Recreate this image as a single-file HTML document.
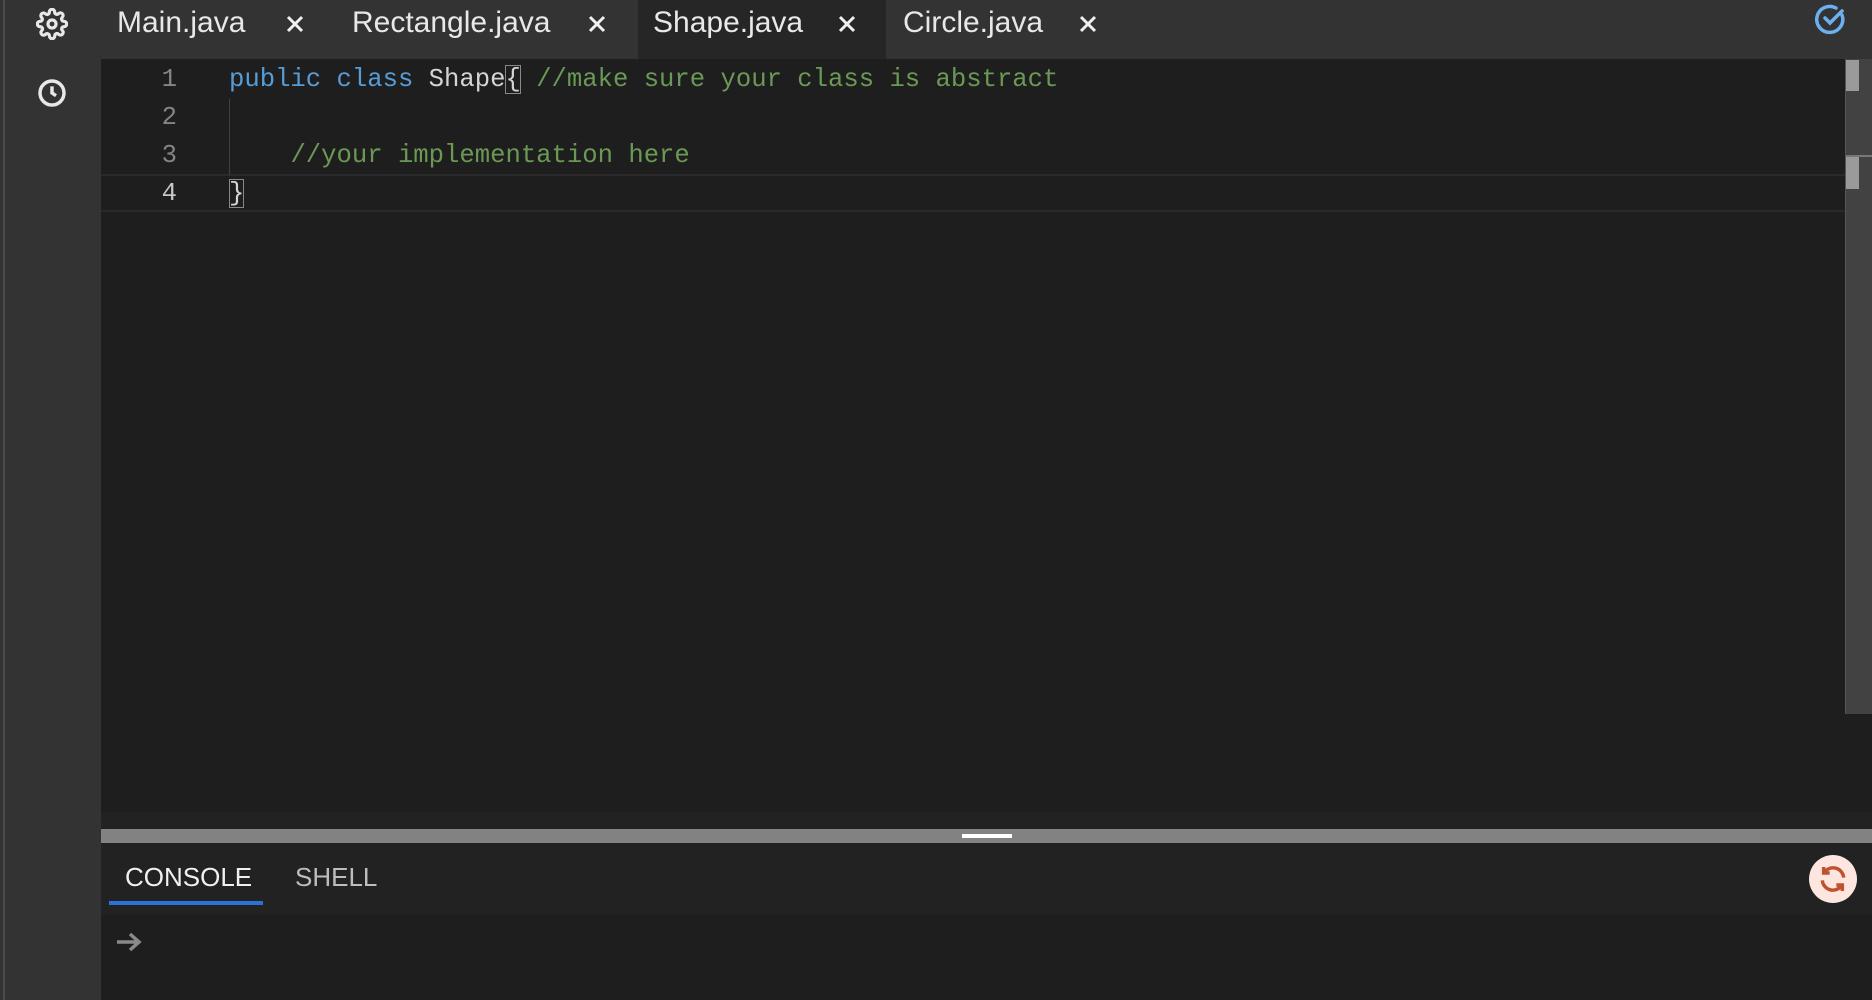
<!DOCTYPE html>
<html><head><style>
*{margin:0;padding:0;box-sizing:border-box}
body{width:1872px;height:1000px;background:#1e1e1e;position:relative;overflow:hidden;font-family:"Liberation Sans",sans-serif}
.abs{position:absolute}
.tab{position:absolute;top:0;height:59px;color:#e8e8e8;font-size:30px;line-height:46px}
.x{position:absolute;top:13px;width:22px;height:22px}
.code{font-family:"Liberation Mono",monospace;font-size:25.6px;line-height:38px;white-space:pre;position:absolute}
</style></head><body>
<div class="abs" style="left:0;top:0;width:101px;height:1000px;background:#333"></div>
<div class="abs" style="left:3px;top:0;width:2px;height:1000px;background:#4a4a4a"></div>
<div class="abs" style="left:101px;top:0;width:1771px;height:59px;background:#333"></div>
<div class="abs" style="left:638px;top:0;width:248px;height:59px;background:#262626"></div>
<!-- gear -->
<svg class="abs" style="left:36px;top:8px" width="32" height="32" viewBox="0 0 24 24" fill="none" stroke="#e8e8e8" stroke-width="2.4"><circle cx="12" cy="12" r="3"/><path d="M19.4 15a1.65 1.65 0 0 0 .33 1.820l.06.06a2 2 0 1 1-2.830 2.830l-.06-.06a1.65 1.65 0 0 0-1.820-.33 1.65 1.65 0 0 0-1 1.510V21a2 2 0 1 1-4 0v-.09A1.650 1.650 0 0 0 9 19.4a1.650 1.650 0 0 0-1.820.33l-.06.06a2 2 0 1 1-2.830-2.830l.06-.06A1.650 1.650 0 0 0 4.680 15a1.650 1.650 0 0 0-1.510-1H3a2 2 0 1 1 0-4h.09A1.650 1.650 0 0 0 4.600 9a1.650 1.650 0 0 0-.33-1.820l-.06-.06a2 2 0 1 1 2.830-2.830l.06.06A1.650 1.650 0 0 0 9 4.680a1.650 1.650 0 0 0 1-1.510V3a2 2 0 1 1 4 0v.09a1.650 1.650 0 0 0 1 1.510 1.650 1.650 0 0 0 1.820-.33l.06-.06a2 2 0 1 1 2.830 2.830l-.06.06A1.650 1.650 0 0 0 19.4 9a1.650 1.650 0 0 0 1.510 1H21a2 2 0 1 1 0 4h-.09a1.650 1.650 0 0 0-1.510 1z"/></svg>
<!-- clock -->
<svg class="abs" style="left:36px;top:77px" width="32" height="32" viewBox="0 0 24 24" fill="none" stroke="#e8e8e8" stroke-width="2.6"><circle cx="12" cy="12" r="9"/><path d="M12 7v5l3 2"/></svg>
<div class="tab" style="left:117px">Main.java</div>
<div class="tab" style="left:352px">Rectangle.java</div>
<div class="tab" style="left:653px">Shape.java</div>
<div class="tab" style="left:903px">Circle.java</div>
<svg class="x" style="left:284px" viewBox="0 0 22 22" stroke="#f0f0f0" stroke-width="3"><path d="M4 4L18 18M18 4L4 18"/></svg>
<svg class="x" style="left:586px" viewBox="0 0 22 22" stroke="#f0f0f0" stroke-width="3"><path d="M4 4L18 18M18 4L4 18"/></svg>
<svg class="x" style="left:836px" viewBox="0 0 22 22" stroke="#f0f0f0" stroke-width="3"><path d="M4 4L18 18M18 4L4 18"/></svg>
<svg class="x" style="left:1077px" viewBox="0 0 22 22" stroke="#f0f0f0" stroke-width="3"><path d="M4 4L18 18M18 4L4 18"/></svg>
<!-- check -->
<svg class="abs" style="left:1814px;top:2px" width="34" height="34" viewBox="0 0 34 34" fill="none" stroke="#6cb0f0" stroke-width="3.5" stroke-linecap="round"><path d="M28 13A13 13 0 1 1 22 6"/><path d="M11 16l5 5 12-12"/></svg>
<!-- current line -->
<div class="abs" style="left:101px;top:174px;width:1770px;height:38px;border-top:2px solid #2a2a2a;border-bottom:2px solid #2a2a2a"></div>
<!-- scrollbar -->
<div class="abs" style="left:1845px;top:59px;width:27px;height:655px;background:#424242;border-left:1px solid #555"></div>
<div class="abs" style="left:1846px;top:60px;width:13px;height:31px;background:#9a9a9a"></div>
<div class="abs" style="left:1846px;top:155px;width:26px;height:2px;background:#777"></div>
<div class="abs" style="left:1846px;top:157px;width:13px;height:32px;background:#9a9a9a"></div>
<!-- line numbers -->
<div class="code" style="left:120px;top:61px;width:57px;text-align:right;color:#858585">1
2
3
<span style="color:#c6c6c6">4</span></div>
<div class="abs" style="left:229px;top:99px;width:1px;height:76px;background:#404040"></div>
<div class="code" style="left:229px;top:61px;color:#d4d4d4"><span style="color:#569cd6">public</span> <span style="color:#569cd6">class</span> Shape<span style="outline:1px solid #888;outline-offset:-1px">{</span> <span style="color:#6a9955">//make sure your class is abstract</span>

    <span style="color:#6a9955">//your implementation here</span>
<span style="outline:1px solid #888;outline-offset:-1px">}</span></div>
<!-- splitter -->
<div class="abs" style="left:101px;top:812px;width:1771px;height:17px;background:#222"></div>
<div class="abs" style="left:101px;top:829px;width:1771px;height:14px;background:#828282"></div>
<div class="abs" style="left:962px;top:834px;width:50px;height:4px;background:#fff"></div>
<!-- console header -->
<div class="abs" style="left:101px;top:843px;width:1771px;height:72px;background:#222"></div>
<div class="abs" style="left:125px;top:862px;color:#f0f0f0;font-size:26px">CONSOLE</div>
<div class="abs" style="left:295px;top:862px;color:#bdbdbd;font-size:26px">SHELL</div>
<div class="abs" style="left:109px;top:901px;width:154px;height:4px;background:#2a72d8"></div>
<div class="abs" style="left:1809px;top:855px;width:48px;height:48px;border-radius:50%;background:#fde5e0"></div>
<svg class="abs" style="left:1817px;top:863px" width="32" height="32" viewBox="0 0 24 24" fill="none" stroke="#c0512f" stroke-width="2.6"><path d="M20 11A8 8 0 0 0 5.5 7M4 13a8 8 0 0 0 14.5 4"/><path d="M5 3v4.5h4.5M19 21v-4.5h-4.5"/></svg>
<svg class="abs" style="left:115px;top:930px" width="28" height="24" viewBox="0 0 28 24" fill="none" stroke="#8a8a8a" stroke-width="3.5"><path d="M2 12h22M15 4l9 8-9 8"/></svg>
</body></html>
